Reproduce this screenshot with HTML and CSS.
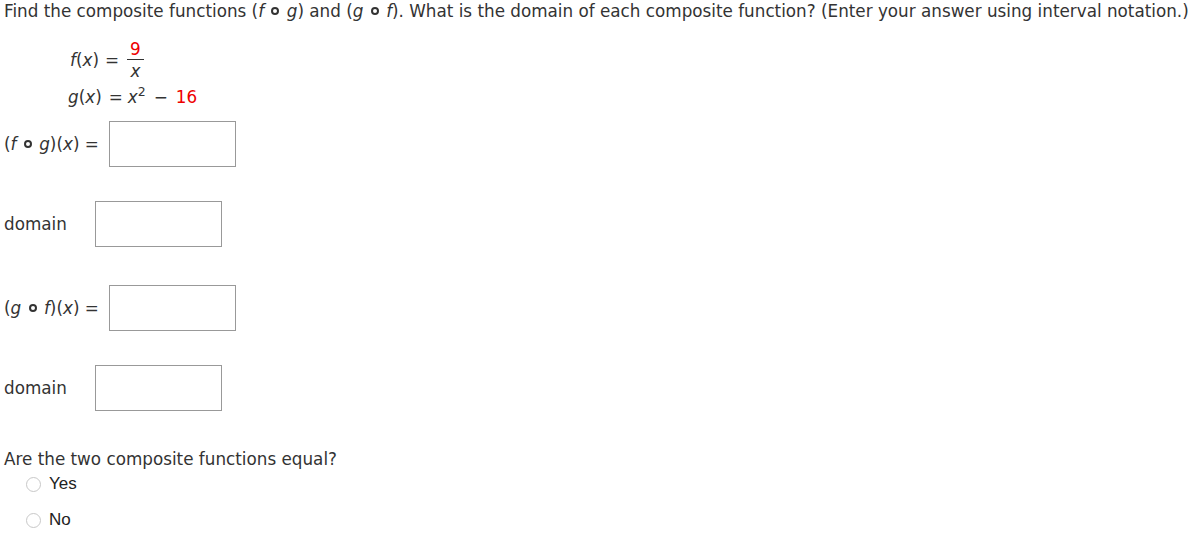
FILE: index.html
```html
<!DOCTYPE html>
<html>
<head>
<meta charset="utf-8">
<link rel="stylesheet" href="styles.css">
</head>
<body>
<div class="page">
  <p class="prompt">Find the composite functions (<i>f</i> <span class="ring"></span> <i>g</i>) and (<i>g</i> <span class="ring"></span> <i>f</i>). What is the domain of each composite function? (Enter your answer using interval notation.)</p>

  <div class="defs">
    <div class="def def-f">
      <span class="lhs"><i>f</i>(<i>x</i>)</span>
      <span class="eq">=</span>
      <span class="frac"><span class="num red">9</span><span class="den"><i>x</i></span></span>
    </div>
    <div class="def def-g">
      <span class="lhs"><i>g</i>(<i>x</i>)</span>
      <span class="eq">=</span>
      <span class="rhs"><i>x</i><sup>2</sup><span class="minus">−</span><span class="red">16</span></span>
    </div>
  </div>

  <div class="row row-comp">
    <span class="label comp">(<i>f</i> <span class="ring"></span> <i>g</i>)(<i>x</i>) <span class="eq">=</span></span>
    <span class="box"></span>
  </div>
  <div class="row row-domain">
    <span class="label dom">domain</span>
    <span class="box"></span>
  </div>
  <div class="row row-comp2">
    <span class="label comp">(<i>g</i> <span class="ring"></span> <i>f</i>)(<i>x</i>) <span class="eq">=</span></span>
    <span class="box"></span>
  </div>
  <div class="row row-domain">
    <span class="label dom">domain</span>
    <span class="box"></span>
  </div>

  <p class="question">Are the two composite functions equal?</p>
  <div class="options">
    <label class="opt"><span class="radio"></span><span class="opt-text">Yes</span></label>
    <label class="opt opt-no"><span class="radio"></span><span class="opt-text">No</span></label>
  </div>
</div>
</body>
</html>
```
FILE: styles.css
```css
html, body {
  margin: 0;
  padding: 0;
  background: #fff;
}
.page {
  font-family: "DejaVu Sans", Verdana, sans-serif;
  font-size: 16.8px;
  color: #333;
  padding: 0 4px;
}
.prompt {
  margin: 0;
  line-height: 22px;
  white-space: nowrap;
}
i {
  font-style: italic;
}
.ring {
  display: inline-block;
  box-sizing: border-box;
  width: 8px;
  height: 8px;
  border: 2px solid #333;
  border-radius: 50%;
  vertical-align: 2px;
  margin: 0 2px;
}
.red {
  color: #e00;
}
.defs {
  margin-top: 16px;
}
.def {
  display: flex;
  align-items: center;
}
.def-f {
  height: 43px;
  padding-left: 66px;
}
.def-f .eq {
  margin: 0 8px 0 6px;
}
.def-g {
  height: 20px;
  margin-top: 6px;
  padding-left: 64px;
}
.def-g .eq {
  margin: 0 5px 0 7px;
}
.frac {
  display: inline-flex;
  flex-direction: column;
  align-items: center;
}
.frac .num {
  line-height: 20px;
  padding: 0 3px;
  border-bottom: 1px solid #333;
}
.frac .den {
  line-height: 20px;
  margin-top: 1px;
}
.rhs sup {
  font-size: 12.5px;
  vertical-align: 7px;
  line-height: 0;
}
.minus {
  margin: 0 8px 0 8px;
}
.row {
  display: flex;
  align-items: center;
}
.label {
  display: inline-block;
  flex: none;
}
.comp {
  width: 105px;
  white-space: nowrap;
}
.dom {
  width: 91px;
}
.box {
  display: inline-block;
  box-sizing: border-box;
  width: 127px;
  height: 46px;
  border: 1px solid #999;
  background: #fff;
}
.row-comp {
  margin-top: 14px;
}
.row-domain {
  margin-top: 34px;
}
.row-comp2 {
  margin-top: 38px;
}
.question {
  margin: 37px 0 0;
  line-height: 22px;
}
.options {
  margin-left: 22px;
  margin-top: 3px;
  font-family: "Liberation Sans", Arial, sans-serif;
  font-size: 17px;
  color: #222;
}
.opt {
  display: flex;
  align-items: center;
  height: 22px;
}
.opt-no {
  margin-top: 14px;
}
.radio {
  box-sizing: border-box;
  width: 15px;
  height: 15px;
  border: 1px solid #c8c8c8;
  border-radius: 50%;
  background: #fff;
  margin-right: 8px;
}
```
